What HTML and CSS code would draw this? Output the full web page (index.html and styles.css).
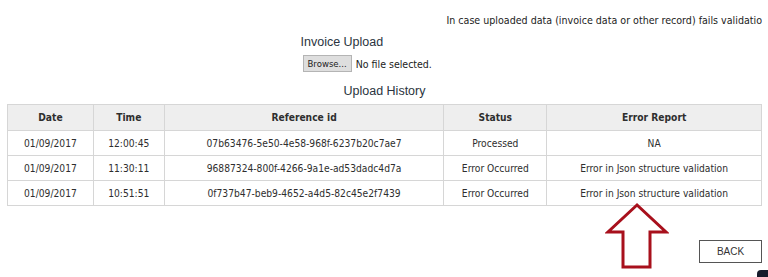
FILE: index.html
```html
<!DOCTYPE html>
<html>
<head>
<meta charset="utf-8">
<link rel="stylesheet" href="styles.css">
</head>
<body>
<div class="page">
  <div class="notice-row">
    <div class="notice">In case uploaded data (invoice data or other record) fails validatio</div>
  </div>
  <div class="upload">
    <div class="upload-box">
      <div class="upload-title">Invoice Upload</div>
      <div class="file-row">
        <span class="browse">Browse...</span>
        <span class="nofile">No file selected.</span>
      </div>
    </div>
  </div>
  <div class="history-title">Upload History</div>
  <table class="history">
    <colgroup>
      <col class="c1"><col class="c2"><col class="c3"><col class="c4"><col class="c5">
    </colgroup>
    <thead>
      <tr><th>Date</th><th>Time</th><th>Reference id</th><th>Status</th><th>Error Report</th></tr>
    </thead>
    <tbody>
      <tr><td>01/09/2017</td><td>12:00:45</td><td>07b63476-5e50-4e58-968f-6237b20c7ae7</td><td>Processed</td><td>NA</td></tr>
      <tr><td>01/09/2017</td><td>11:30:11</td><td>96887324-800f-4266-9a1e-ad53dadc4d7a</td><td>Error Occurred</td><td>Error in Json structure validation</td></tr>
      <tr><td>01/09/2017</td><td>10:51:51</td><td>0f737b47-beb9-4652-a4d5-82c45e2f7439</td><td>Error Occurred</td><td>Error in Json structure validation</td></tr>
    </tbody>
  </table>
  <div class="actions">
    <button class="back">BACK</button>
  </div>
  <svg class="arrow" width="64" height="70" viewBox="0 0 64 70">
    <path d="M32 3 L3 30 L18 30 L18 65 L45 65 L45 30 L61 30 Z" fill="none" stroke="#a8101c" stroke-width="3" stroke-linejoin="miter"/>
  </svg>
  <div class="corner"></div>
</div>
</body>
</html>
```
FILE: styles.css
```css
html, body {
  margin: 0;
  padding: 0;
  background: #fff;
  overflow: hidden;
}
.page {
  position: relative;
  width: 768px;
  height: 277px;
  padding: 0 6px 0 7px;
  box-sizing: border-box;
  font-family: "DejaVu Sans Condensed", "DejaVu Sans", sans-serif;
  font-stretch: condensed;
  color: #333;
}
.notice-row {
  display: flex;
  justify-content: flex-end;
  padding-top: 14px;
  height: 12px;
}
.notice {
  white-space: nowrap;
  font-size: 10.6px;
  line-height: 12px;
  color: #222;
}
.upload {
  display: flex;
  justify-content: center;
  margin-top: 8px;
}
.upload-box {
  width: 174px;
  margin-left: 6px;
}
.upload-title {
  font-family: "Liberation Sans", Arial, sans-serif;
  font-size: 12.5px;
  line-height: 16px;
  color: #2a3440;
}
.file-row {
  display: flex;
  align-items: center;
  margin-top: 5px;
  margin-left: 2px;
  gap: 4px;
}
.browse {
  display: inline-block;
  background: #dedede;
  border: 1px solid #b4b4b4;
  font-size: 9.5px;
  line-height: 15px;
  padding: 0 4px;
  color: #222;
}
.nofile {
  font-size: 10.5px;
  color: #222;
}
.history-title {
  text-align: center;
  font-family: "Liberation Sans", Arial, sans-serif;
  font-size: 12.5px;
  line-height: 16px;
  color: #2a3440;
  margin-top: 11px;
}
.history {
  width: 755px;
  border-collapse: collapse;
  margin-top: 5px;
  font-size: 10.2px;
  color: #2e2e2e;
}
.c1 { width: 86px; }
.c2 { width: 71px; }
.c3 { width: 280px; }
.c4 { width: 103px; }
.c5 { width: 215px; }
.history th, .history td {
  border: 1px solid #d6d6d6;
  text-align: center;
  padding: 0;
  white-space: nowrap;
}
.history th {
  background: #eeeeee;
  height: 25px;
  font-weight: bold;
  color: #2e2e2e;
}
.history td {
  height: 24px;
}
.actions {
  display: flex;
  justify-content: flex-end;
  margin-top: 34px;
}
.back {
  width: 63px;
  height: 23px;
  border: 1px solid #555;
  background: #fff;
  font-family: "Liberation Sans", Arial, sans-serif;
  font-size: 10px;
  color: #333;
  padding: 0;
}
.arrow {
  position: absolute;
  left: 605px;
  top: 202px;
}
.corner {
  position: absolute;
  right: 0;
  bottom: 0;
  width: 11px;
  height: 7px;
  background: #161c2c;
  border-top-left-radius: 4px;
}
```
